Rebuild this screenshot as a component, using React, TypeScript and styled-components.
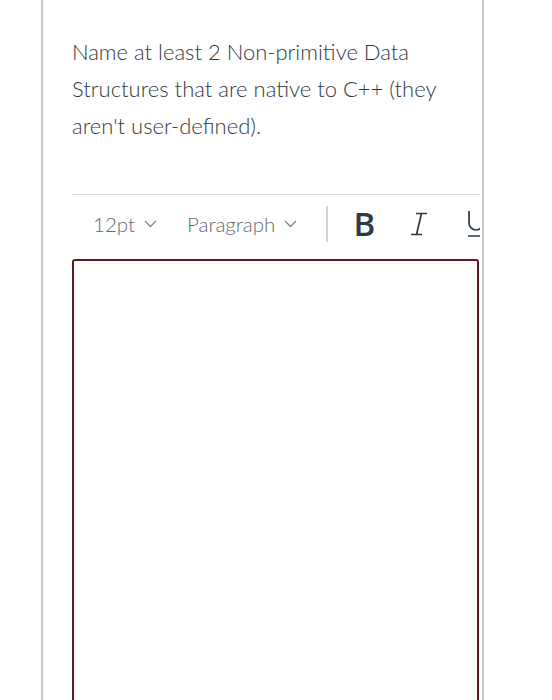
import React from "react";
import styled, { createGlobalStyle } from "styled-components";

const GlobalStyle = createGlobalStyle`
  html, body {
    margin: 0;
    padding: 0;
    background: #ffffff;
  }
  body {
    font-family: Lato, "Open Sans", sans-serif;
    overflow: hidden;
  }
`;

const Page = styled.div`
  height: 700px;
  overflow: hidden;
`;

const Card = styled.div`
  margin-left: 41px;
  min-height: 760px;
  border-left: 2px solid #c9c9c9;
  border-right: 2px solid #c9c9c9;
  padding: 33px 2px 0 29px;
  width: 408px;
`;

const Question = styled.p`
  margin: 0;
  font-size: 22px;
  line-height: 37px;
  color: #333a40;
  font-weight: 300;
  width: 404px;
`;

const Editor = styled.div`
  margin-top: 50px;
  border-top: 1px solid #dcdcdc;
`;

const Toolbar = styled.div`
  height: 64px;
  box-sizing: border-box;
  padding: 0 0 7px 21px;
  display: flex;
  align-items: center;
  overflow: hidden;
  white-space: nowrap;
`;

const Dropdown = styled.button<{ $gap: number }>`
  display: flex;
  align-items: center;
  gap: 9px;
  border: none;
  background: none;
  padding: 0;
  margin-right: ${(p) => p.$gap}px;
  font-family: Lato, sans-serif;
  font-weight: 300;
  font-size: 20.5px;
  color: #5f6a72;
  cursor: pointer;
`;

const Divider = styled.span`
  width: 2px;
  height: 36px;
  background: #d4d4d4;
  margin-right: 25px;
  flex: none;
`;

const IconButton = styled.span<{ $w: number }>`
  width: ${(p) => p.$w}px;
  flex: none;
  display: flex;
  align-items: center;
  color: #2d3b45;
`;

const BoldGlyph = styled.span`
  font-family: "Open Sans", Lato, sans-serif;
  font-weight: 600;
  font-size: 33px;
  line-height: 1;
`;

const TextArea = styled.div`
  height: 500px;
  border: 2px solid #5e1a1f;
  border-radius: 3px;
  margin-right: 1px;
`;

const Chevron = () => (
  <svg width="13" height="8" viewBox="0 0 13 8" fill="none">
    <path d="M1 1l5.5 5.5L12 1" stroke="#7a858d" strokeWidth="1.3" />
  </svg>
);

const ItalicIcon = () => (
  <svg width="18" height="24" viewBox="0 0 18 24" fill="none" stroke="#2d3b45" strokeWidth="1.7">
    <path d="M6 1.5h11M1 22.5h11M11.5 1.5L6.5 22.5" />
  </svg>
);

const UnderlineIcon = () => (
  <svg width="18" height="28" viewBox="0 0 18 28" fill="none" stroke="#2d3b45" strokeWidth="1.7">
    <path d="M2 1v12a7 7 0 0 0 14 0V1M1 26h16" />
  </svg>
);

export default function App() {
  return (
    <Page>
      <GlobalStyle />
      <Card>
        <Question>
          Name at least 2 Non-primitive Data Structures that are native to C++
          (they aren't user-defined).
        </Question>
        <Editor>
          <Toolbar>
            <Dropdown $gap={30}>
              12pt <Chevron />
            </Dropdown>
            <Dropdown $gap={29}>
              Paragraph <Chevron />
            </Dropdown>
            <Divider />
            <IconButton $w={57}>
              <BoldGlyph>B</BoldGlyph>
            </IconButton>
            <IconButton $w={57}>
              <ItalicIcon />
            </IconButton>
            <IconButton $w={30}>
              <UnderlineIcon />
            </IconButton>
          </Toolbar>
          <TextArea />
        </Editor>
      </Card>
    </Page>
  );
}
